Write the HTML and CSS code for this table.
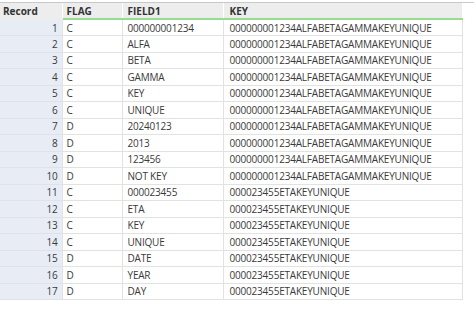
FILE: index.html
```html
<!DOCTYPE html>
<html>
<head>
<meta charset="utf-8">
<link rel="stylesheet" href="styles.css">
</head>
<body>
<div class="wrap">
<table class="grid">
<thead>
<tr><th class="rec">Record</th><th class="c1">FLAG</th><th class="c2">FIELD1</th><th class="c3">KEY</th></tr>
</thead>
<tbody>
<tr><td class="rec">1</td><td>C</td><td>000000001234</td><td>000000001234ALFABETAGAMMAKEYUNIQUE</td></tr>
<tr><td class="rec">2</td><td>C</td><td>ALFA</td><td>000000001234ALFABETAGAMMAKEYUNIQUE</td></tr>
<tr><td class="rec">3</td><td>C</td><td>BETA</td><td>000000001234ALFABETAGAMMAKEYUNIQUE</td></tr>
<tr><td class="rec">4</td><td>C</td><td>GAMMA</td><td>000000001234ALFABETAGAMMAKEYUNIQUE</td></tr>
<tr><td class="rec">5</td><td>C</td><td>KEY</td><td>000000001234ALFABETAGAMMAKEYUNIQUE</td></tr>
<tr><td class="rec">6</td><td>C</td><td>UNIQUE</td><td>000000001234ALFABETAGAMMAKEYUNIQUE</td></tr>
<tr><td class="rec">7</td><td>D</td><td>20240123</td><td>000000001234ALFABETAGAMMAKEYUNIQUE</td></tr>
<tr><td class="rec">8</td><td>D</td><td>2013</td><td>000000001234ALFABETAGAMMAKEYUNIQUE</td></tr>
<tr><td class="rec">9</td><td>D</td><td>123456</td><td>000000001234ALFABETAGAMMAKEYUNIQUE</td></tr>
<tr><td class="rec">10</td><td>D</td><td>NOT KEY</td><td>000000001234ALFABETAGAMMAKEYUNIQUE</td></tr>
<tr><td class="rec">11</td><td>C</td><td>000023455</td><td>000023455ETAKEYUNIQUE</td></tr>
<tr><td class="rec">12</td><td>C</td><td>ETA</td><td>000023455ETAKEYUNIQUE</td></tr>
<tr><td class="rec">13</td><td>C</td><td>KEY</td><td>000023455ETAKEYUNIQUE</td></tr>
<tr><td class="rec">14</td><td>C</td><td>UNIQUE</td><td>000023455ETAKEYUNIQUE</td></tr>
<tr><td class="rec">15</td><td>D</td><td>DATE</td><td>000023455ETAKEYUNIQUE</td></tr>
<tr><td class="rec">16</td><td>D</td><td>YEAR</td><td>000023455ETAKEYUNIQUE</td></tr>
<tr><td class="rec">17</td><td>D</td><td>DAY</td><td>000023455ETAKEYUNIQUE</td></tr>
</tbody>
</table>
</div>
</body>
</html>
```
FILE: styles.css
```css
html, body {
  margin: 0;
  padding: 0;
  background: #ffffff;
}
body {
  font-family: "Open Sans", "Noto Sans", sans-serif;
  font-size: 10px;
  letter-spacing: -0.2px;
  color: #3a3a3a;
}
.wrap {
  padding-top: 2px;
}
.wrap::before {
  content: "";
  display: block;
  height: 1px;
  background: #c8c8c8;
}
.grid {
  border-collapse: collapse;
  table-layout: fixed;
  width: 463px;
}
.grid th {
  height: 16px;
  padding: 0 0 0 4px;
  text-align: left;
  font-weight: 700;
  background: #ededed;
  color: #333;
  border-right: 1px solid #ffffff;
  border-bottom: 2px solid #98dd8f;
  line-height: 14px;
  letter-spacing: 0;
}
.grid th.rec {
  width: 62px;
  padding-left: 3px;
  border-bottom: 2px solid #ededed;
  box-sizing: border-box;
}
.grid th.c1 { width: 60px; box-sizing: border-box; }
.grid th.c2 { width: 101px; box-sizing: border-box; padding-left: 5px; }
.grid th.c3 { box-sizing: border-box; padding-left: 6px; }
.grid td {
  height: 16.5px;
  padding: 0 0 0 4px;
  border: 1px solid #e2e2e2;
  white-space: nowrap;
  overflow: hidden;
  line-height: 14px;
  box-sizing: border-box;
}
.grid td:nth-child(3) { padding-left: 5px; }
.grid td:nth-child(4) { padding-left: 6px; }
.grid td.rec {
  background: #e8ecf5;
  text-align: right;
  padding: 0 4px 0 0;
  border-left: 0;
  border-color: #dde2ec;
}
```
